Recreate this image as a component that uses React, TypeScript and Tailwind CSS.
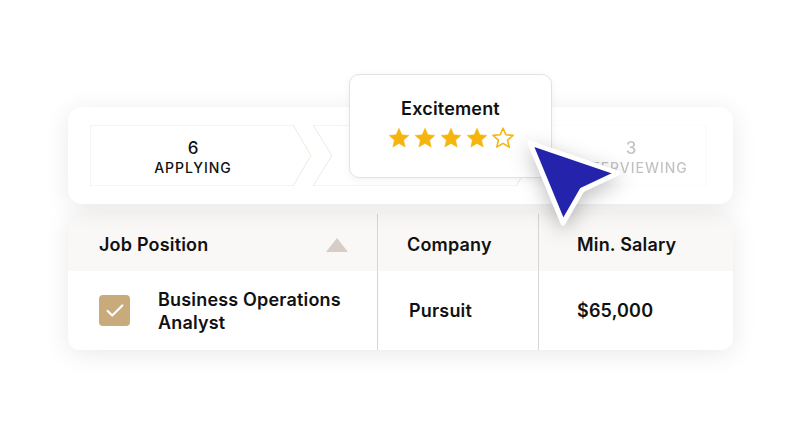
import { Check } from 'lucide-react'

const font = { fontFamily: 'Inter, "Noto Sans", sans-serif' }

function Star({ filled }: { filled: boolean }) {
  return (
    <svg viewBox="0 0 24 24" className="h-[24px] w-[24px]">
      <path
        d="M12 2.2l2.9 6.6 7.1.6-5.4 4.7 1.6 7-6.2-3.7-6.2 3.7 1.6-7L2 9.4l7.1-.6z"
        fill={filled ? '#f5b50c' : 'white'}
        stroke="#f5b50c"
        strokeWidth={filled ? 0.5 : 1.6}
        strokeLinejoin="round"
      />
    </svg>
  )
}

function Step({
  points,
  width,
  count,
  label,
  faded,
  offset
}: {
  points: string
  width: string
  count: string
  label: string
  faded?: boolean
  offset?: string
}) {
  return (
    <div className={`relative h-[61px] shrink-0 ${width} ${faded ? 'opacity-25' : ''}`}>
      <svg className="absolute inset-0 h-full w-full" viewBox="0 0 100 61" preserveAspectRatio="none">
        <polygon points={points} fill="white" stroke="#efe9df" strokeWidth="1" vectorEffect="non-scaling-stroke" />
      </svg>
      <div className={`relative flex h-full flex-col items-center justify-center pt-[3px] ${offset ?? ''}`}>
        <span className="text-[17px] font-medium leading-[20px] text-[#111]">{count}</span>
        <span className="text-[14px] font-medium leading-[19px] tracking-[0.07em] text-[#111]">{label}</span>
      </div>
    </div>
  )
}

export default function App() {
  return (
    <div className="relative h-[434px] w-[800px] overflow-hidden bg-white" style={font}>
      <div className="ml-[68px] w-[665px] pt-[107px]">
        <div className="relative flex h-[97px] items-center rounded-[14px] bg-white pl-[22px] shadow-[0_4px_26px_rgba(0,0,0,0.09)]">
          <Step points="0,0 91.5,0 99.5,30.5 91.5,61 0,61" width="w-[222px]" count="6" label="APPLYING" offset="pr-[16px]" />
          <Step points="0,0 91.5,0 99.5,30.5 91.5,61 0,61 8.5,30.5" width="w-[222px] ml-[1px]" count="2" label="RESEARCHING" />
          <Step points="0,0 99.5,0 99.5,61 0,61 10.5,30.5" width="w-[170px] ml-[2px]" count="3" label="INTERVIEWING" faded offset="pl-[18px]" />

          <div className="absolute left-[281px] top-[-33px] flex h-[104px] w-[203px] flex-col items-center rounded-[10px] border border-[#e2e2e2] bg-white pt-[22px] shadow-[0_2px_8px_rgba(0,0,0,0.05)]">
            <span className="text-[18px] font-semibold leading-[24px] tracking-[0.01em] text-[#111]">Excitement</span>
            <div className="mt-[5px] flex gap-[2px]">
              <Star filled />
              <Star filled />
              <Star filled />
              <Star filled />
              <Star filled={false} />
            </div>
          </div>
        </div>

        <div className="mt-[10px] overflow-hidden rounded-[12px] bg-white text-[18px] font-semibold tracking-[0.01em] text-[#111] shadow-[0_4px_26px_rgba(0,0,0,0.09)]">
          <div className="grid grid-cols-[310px_161px_194px]">
            <div className="flex h-[57px] items-center justify-between border-r border-[#d6d6d6] bg-[#f9f8f6] pl-[31px] pr-[29px] pt-[4px]">
              <span>Job Position</span>
              <svg viewBox="0 0 22 14" className="h-[14px] w-[22px]">
                <polygon points="11,0 22,14 0,14" fill="#d6cec6" />
              </svg>
            </div>
            <div className="flex h-[57px] items-center border-r border-[#d6d6d6] bg-[#f9f8f6] pl-[29px] pt-[4px]">
              <span>Company</span>
            </div>
            <div className="flex h-[57px] items-center bg-[#f9f8f6] pl-[38px] pt-[4px]">
              <span>Min. Salary</span>
            </div>

            <div className="flex h-[79px] items-center gap-[28px] border-r border-[#d6d6d6] pl-[31px]">
              <div className="flex h-[31px] w-[31px] items-center justify-center rounded-[4px] bg-[#c9ab7b]">
                <Check className="h-[22px] w-[22px] text-white" strokeWidth={2.4} />
              </div>
              <span className="leading-[23px]">
                Business Operations
                <br />
                Analyst
              </span>
            </div>
            <div className="flex h-[79px] items-center border-r border-[#d6d6d6] pl-[31px]">
              <span>Pursuit</span>
            </div>
            <div className="flex h-[79px] items-center pl-[38px]">
              <span>$65,000</span>
            </div>
          </div>
        </div>
      </div>

      <svg
        className="absolute left-[518px] top-[130px] h-[106px] w-[112px] drop-shadow-[0_6px_10px_rgba(0,0,0,0.25)]"
        viewBox="0 0 112 106"
      >
        <path
          d="M12 13 L100 43 L64 60 L45 93 Z"
          fill="#2323ab"
          stroke="white"
          strokeWidth="5"
          strokeLinejoin="round"
        />
      </svg>
    </div>
  )
}
